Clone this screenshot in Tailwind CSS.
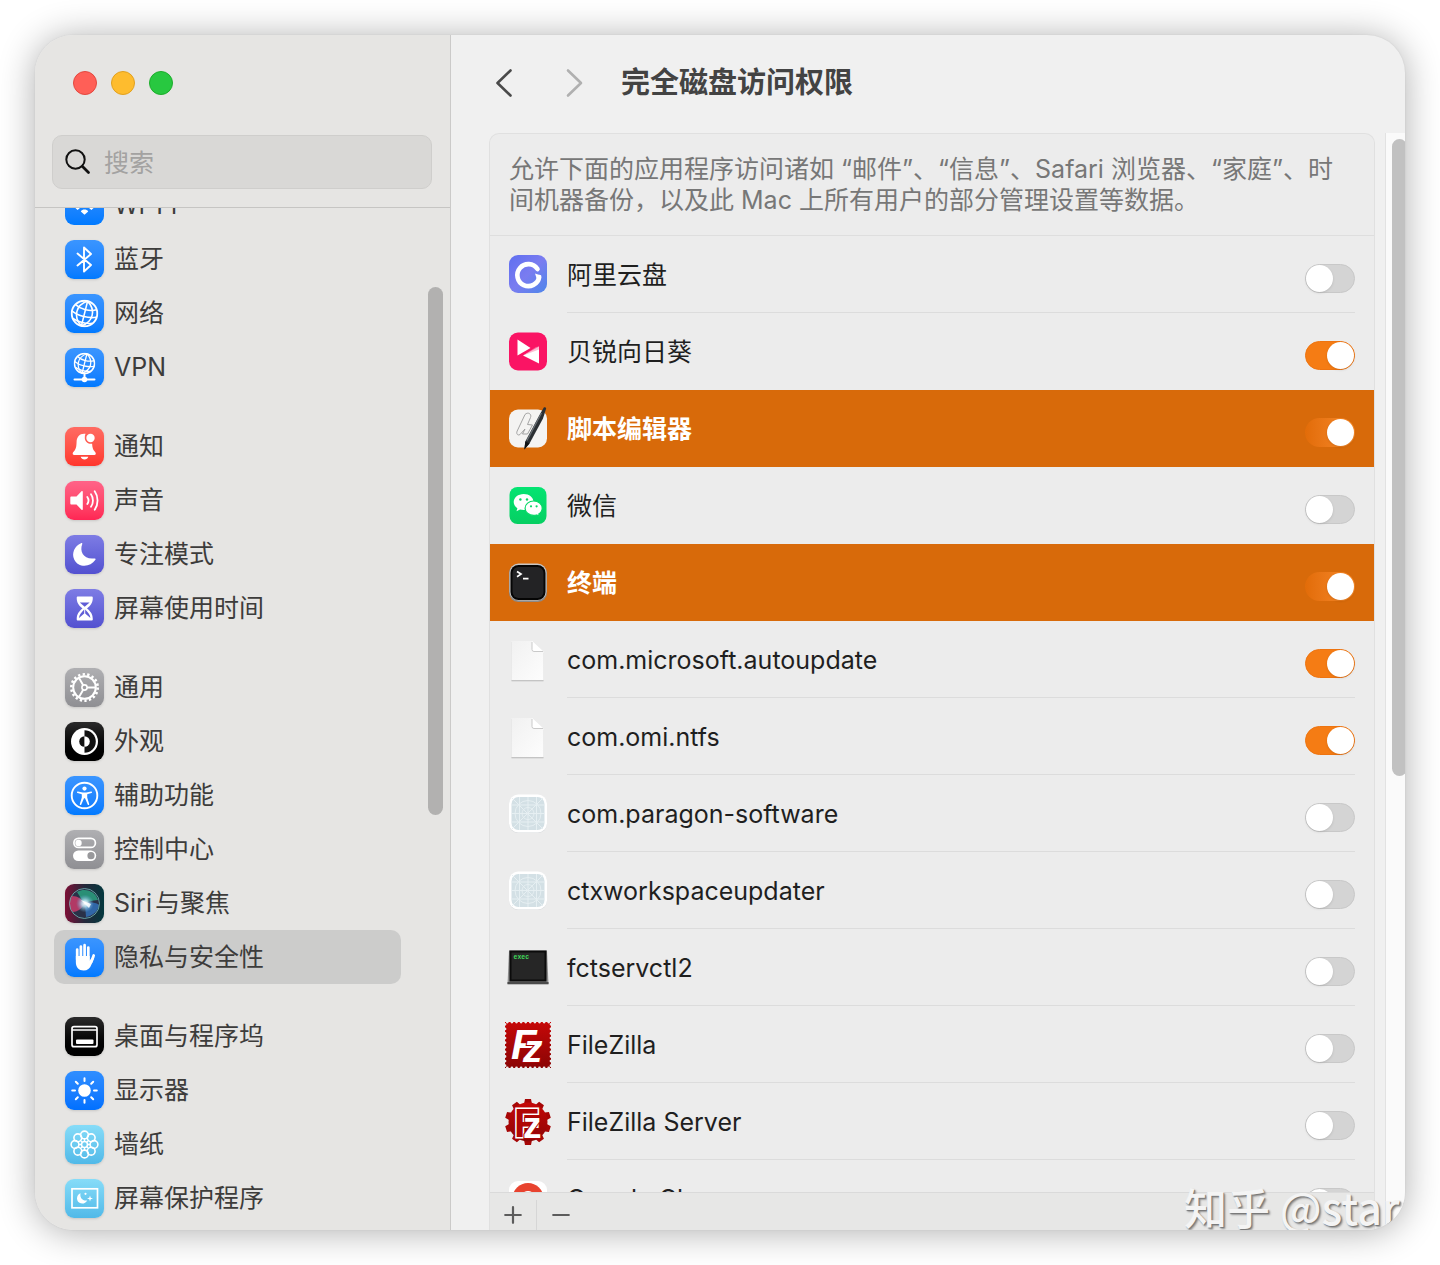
<!DOCTYPE html>
<html lang="zh-CN">
<head>
<meta charset="utf-8">
<meta name="viewport" content="width=device-width, initial-scale=1">
<title>完全磁盘访问权限</title>
<script src="https://cdn.jsdelivr.net/npm/@tailwindcss/browser@4"></script>
</head>
<body class="bg-white font-['Inter','Noto_Sans_CJK_SC',sans-serif] text-[25px] leading-[31px]">

<!-- Shared symbols -->
<svg class="absolute size-0" aria-hidden="true">
  <defs>
    <linearGradient id="paper" x1="0" y1="0" x2="1" y2="1"><stop offset="0" stop-color="#f1f1f1"/><stop offset="1" stop-color="#fdfdfd"/></linearGradient>
    <linearGradient id="fzred" x1="0" y1="0" x2="0" y2="1"><stop offset="0" stop-color="#c60808"/><stop offset="1" stop-color="#8a0505"/></linearGradient>
    <linearGradient id="ali" x1="0" y1="0" x2="1" y2="1"><stop offset="0" stop-color="#5f6ff0"/><stop offset=".5" stop-color="#7a7cf0"/><stop offset="1" stop-color="#4d86ea"/></linearGradient>
    <linearGradient id="wx" x1="0" y1="0" x2="0" y2="1"><stop offset="0" stop-color="#04e472"/><stop offset="1" stop-color="#06cf62"/></linearGradient>
    <linearGradient id="siriBg" x1="0" y1="0" x2="1" y2="0"><stop offset="0" stop-color="#7d0f36"/><stop offset=".5" stop-color="#25283a"/><stop offset="1" stop-color="#04383e"/></linearGradient>
    <radialGradient id="siriGlow"><stop offset="0" stop-color="#fff"/><stop offset=".35" stop-color="#bfe6f5" stop-opacity=".85"/><stop offset="1" stop-color="#5aa0d0" stop-opacity="0"/></radialGradient>
    <symbol id="globe" viewBox="0 0 28 28">
      <g fill="none" stroke="#fff" stroke-width="1.6">
        <circle cx="14" cy="14" r="12.8" stroke-width="1.9"/>
        <g transform="rotate(14 14 14)">
          <path d="M14 1.2v25.6M14 1.2C3.5 8 3.5 20 14 26.8M14 1.2c10.500 6.800 10.500 18.800 0 25.600"/>
          <path d="M3.200 7.500c6 3.500 15.600 3.500 21.600 0M1.200 14.500c7 3.500 18.600 3.500 25.600 0M4 21.500c5.500 2.500 14.500 2.500 20 0"/>
        </g>
      </g>
    </symbol>
    <symbol id="doc" viewBox="0 0 46 46">
      <path d="M6.500 4H27l11.500 11.500V43.500h-32z" fill="#000" opacity=".12" transform="translate(0 1)"/>
      <path d="M6.500 4H27l11.500 11.500V43.500h-32z" fill="url(#paper)"/>
      <path d="M6.500 43.500h32" stroke="#c4c4c4" stroke-width="1"/>
      <path d="M27 4v8.500a2 2 0 0 0 2 2h9.500z" fill="#fff"/>
      <path d="M27 5v7.500a2 2 0 0 0 2 2h9" fill="none" stroke="#c9c9c9" stroke-width="1"/>
    </symbol>
    <symbol id="kext" viewBox="0 0 46 46">
      <rect x="4" y="4" width="38" height="38" rx="9" fill="#d5d8da"/>
      <rect x="4" y="3.500" width="38" height="38" rx="9" fill="#fff"/>
      <rect x="6.500" y="6" width="33" height="33" rx="7" fill="#d3e0e5"/>
      <g fill="none" stroke="#e6eff2" stroke-width="1">
        <path d="M23 6v33M6.500 22.500h33M14.500 6v33M31.500 6v33M6.500 14h33M6.500 31h33" />
        <circle cx="23" cy="22.500" r="6"/><circle cx="23" cy="22.500" r="13"/>
        <path d="M7 7l31 31M38 7L7 38"/>
      </g>
    </symbol>
  </defs>
</svg>

<div class="flex h-screen p-[35px]">
  <div class="relative flex flex-1 min-w-0 overflow-hidden rounded-[38px] bg-[#f0f0f0] shadow-[0_2px_36px_rgba(0,0,0,0.32),0_0_2px_rgba(0,0,0,0.08)]">

    <!-- Sidebar -->
    <aside class="relative flex w-[416px] shrink-0 flex-col border-r border-[#cbcac9] bg-[#e6e5e3] text-[#3d3c3b]">
      <div class="border-b border-[#c6c5c3] pb-[18px] pl-[17px] pr-[18px] pt-9">
        <div class="flex gap-[14px] pl-[21px]">
          <button aria-label="关闭" class="size-6 rounded-full border border-[#e2483f] bg-[#ff5f57]"></button>
          <button aria-label="最小化" class="size-6 rounded-full border border-[#e1a01f] bg-[#febc2e]"></button>
          <button aria-label="缩放" class="size-6 rounded-full border border-[#1dad2b] bg-[#28c840]"></button>
        </div>
        <label class="mt-10 flex h-[54px] items-center gap-[11px] rounded-[10px] border border-[#cfcecc] bg-[#d9d8d6] pl-3">
          <svg class="size-7 shrink-0" viewBox="0 0 28 28" fill="none" stroke="#111" stroke-linecap="round"><circle cx="10.500" cy="11.500" r="9.200" stroke-width="2"/><path d="M17.500 18.500l6 6" stroke-width="2.800"/></svg>
          <input type="text" aria-label="搜索" placeholder="搜索" class="w-full min-w-0 bg-transparent pt-[2px] outline-none placeholder:text-[#a3a2a1]">
        </label>
      </div>

      <nav class="min-h-0 flex-1 overflow-hidden pl-[19px] pr-[49px]">
        <ul class="-mt-[30px]">
          <li><a href="#" class="flex h-[54px] items-center gap-[10px] pl-[11px]">
            <span class="size-[39px] shrink-0 rounded-[9px] bg-linear-to-b from-[#2f90ff] to-[#007aff]"><svg viewBox="0 0 39 39" fill="none" stroke="#fff" stroke-width="3"><path d="M6 16c7-7 20-7 27 0M11.500 23c4.500-5 11.500-5 16 0"/><path d="M15.800 25.500c1.500-2.600 5.900-2.600 7.400 0l-3.700 3.200z" fill="#fff" stroke="none"/></svg></span>Wi-Fi</a></li>
          <li><a href="#" class="flex h-[54px] items-center gap-[10px] pl-[11px]">
            <span class="size-[39px] shrink-0 rounded-[9px] bg-linear-to-b from-[#3a95ff] to-[#007aff] shadow-sm"><svg viewBox="0 0 39 39" fill="none" stroke="#fff" stroke-width="1.900" stroke-linejoin="round" stroke-linecap="round"><path d="M12.500 13.500l13.500 11.500-7 6.500V7.500l7 6.500-13.500 11.500"/></svg></span>蓝牙</a></li>
          <li><a href="#" class="flex h-[54px] items-center gap-[10px] pl-[11px]">
            <span class="size-[39px] shrink-0 rounded-[9px] bg-linear-to-b from-[#3a95ff] to-[#007aff] shadow-sm"><svg viewBox="0 0 39 39"><use href="#globe" x="5.500" y="5.500" width="28" height="28"/></svg></span>网络</a></li>
          <li><a href="#" class="flex h-[54px] items-center gap-[10px] pl-[11px]">
            <span class="size-[39px] shrink-0 rounded-[9px] bg-linear-to-b from-[#3a95ff] to-[#007aff] shadow-sm"><svg viewBox="0 0 39 39"><use href="#globe" x="8.500" y="4.500" width="22" height="22"/><path d="M19.500 26v5M9.500 31.500h20" stroke="#fff" stroke-width="2" stroke-linecap="round"/><circle cx="19.500" cy="31.500" r="2.800" fill="#fff"/></svg></span>VPN</a></li>

          <li class="mt-[25px]"><a href="#" class="flex h-[54px] items-center gap-[10px] pl-[11px]">
            <span class="size-[39px] shrink-0 rounded-[9px] bg-linear-to-b from-[#ff6b62] to-[#ff352b] shadow-sm"><svg viewBox="0 0 39 39" fill="#fff"><path d="M20.500 6.800c-5.500-.8-8.700 3-8.900 7.700-.2 5.500-.6 7.500-2.600 9.700-1 1.100-1.300 1.600-1.300 2.600 0 .7.500 1.200 1.300 1.200h20.500c.8 0 1.300-.5 1.300-1.200 0-1-.4-1.500-1.300-2.600-1.500-1.700-2.200-3.600-2.400-7.500-3.600.6-7-1.800-7.300-5.500-.1-1.600.1-3.100.7-4.400z"/><circle cx="25.500" cy="11" r="4.200"/><path d="M15.700 29.700h7.600c-.6 1.700-2 2.700-3.800 2.700s-3.200-1-3.800-2.700z"/></svg></span>通知</a></li>
          <li><a href="#" class="flex h-[54px] items-center gap-[10px] pl-[11px]">
            <span class="size-[39px] shrink-0 rounded-[9px] bg-linear-to-b from-[#ff6388] to-[#ff2554] shadow-sm"><svg viewBox="0 0 39 39" fill="none" stroke="#fff" stroke-width="1.800" stroke-linecap="round"><path d="M6.500 15.500h5l5-5.300c.6-.5 1.300-.3 1.300.5v17.600c0 .8-.7 1-1.300.5l-5-5.300h-5c-.8 0-1.200-.4-1.200-1.200v-5.600c0-.8.4-1.200 1.200-1.200z" fill="#fff" stroke="none"/><path d="M22.300 16c1.400 2 1.400 5 0 7M26 13.200c2.600 3.600 2.600 9 0 12.600M29.700 10.300c3.800 5.300 3.800 13.100 0 18.400"/></svg></span>声音</a></li>
          <li><a href="#" class="flex h-[54px] items-center gap-[10px] pl-[11px]">
            <span class="size-[39px] shrink-0 rounded-[9px] bg-linear-to-b from-[#7e7ce4] to-[#5350d0] shadow-sm"><svg viewBox="0 0 39 39" fill="#fff"><path d="M16 8.200c.9-.5 1.600.1 1.200 1-2.900 7.300 1.500 15.600 12.200 14.200 1-.1 1.500.6 1 1.400-5.200 8-17.200 8.100-21.200-.4C6.300 18.300 9.500 11 16 8.200z"/></svg></span>专注模式</a></li>
          <li><a href="#" class="flex h-[54px] items-center gap-[10px] pl-[11px]">
            <span class="size-[39px] shrink-0 rounded-[9px] bg-linear-to-b from-[#7e7ce4] to-[#5350d0] shadow-sm"><svg viewBox="0 0 39 39"><path d="M13 7.500h13.500c.9 0 1.300.5 1.300 1.300 0 5-2 7.700-5.800 10.700 3.800 3 5.800 5.700 5.800 10.700 0 .8-.4 1.300-1.300 1.300H13c-.9 0-1.300-.5-1.300-1.300 0-5 2-7.700 5.800-10.700-3.800-3-5.800-5.700-5.800-10.700 0-.8.4-1.300 1.300-1.300z" fill="#fff"/><path d="M14.800 13.500h9.800l-4.900 4.300zM19.200 20.500v4l-5.200 4.500c.2-3 2.200-5.500 5.200-8.500zM20.200 20.500c3 3 5 5.500 5.200 8.500l-5.200-4.500z" fill="#605dd6"/></svg></span>屏幕使用时间</a></li>

          <li class="mt-[25px]"><a href="#" class="flex h-[54px] items-center gap-[10px] pl-[11px]">
            <span class="size-[39px] shrink-0 rounded-[9px] bg-linear-to-b from-[#afafb2] to-[#8f8f93] shadow-sm"><svg viewBox="0 0 39 39" fill="none" stroke="#fff"><circle cx="19.500" cy="19.500" r="13.200" stroke-width="2.600" stroke-dasharray="2.300 2.308"/><circle cx="19.500" cy="19.500" r="11.300" stroke-width="2"/><circle cx="19.500" cy="19.500" r="2.600" stroke-width="1.600"/><path d="M22 19.500h8.500M18.200 17.300l-4.300-7.500M18.200 21.700l-4.300 7.500" stroke-width="1.900"/></svg></span>通用</a></li>
          <li><a href="#" class="flex h-[54px] items-center gap-[10px] pl-[11px]">
            <span class="size-[39px] shrink-0 rounded-[9px] bg-linear-to-b from-[#2b2b2b] to-black shadow-sm"><svg viewBox="0 0 39 39"><circle cx="19.500" cy="19.500" r="13.500" fill="#fff"/><path d="M19.500 8.200a11.300 11.300 0 0 1 0 22.600z" fill="#111"/><path d="M19.500 14.200a5.300 5.300 0 0 0 0 10.600z" fill="#111"/><path d="M19.500 14.200a5.300 5.300 0 0 1 0 10.600z" fill="#fff"/></svg></span>外观</a></li>
          <li><a href="#" class="flex h-[54px] items-center gap-[10px] pl-[11px]">
            <span class="size-[39px] shrink-0 rounded-[9px] bg-linear-to-b from-[#3a95ff] to-[#007aff] shadow-sm"><svg viewBox="0 0 39 39"><circle cx="19.500" cy="19.500" r="12.800" fill="none" stroke="#fff" stroke-width="1.900"/><circle cx="19.500" cy="12.600" r="2.100" fill="#fff"/><path d="M12.800 15.600l5 1h3.400l5-1c1-.1 1.200 1.200.2 1.500l-4.200 1.200v3.200l2 6.500c.2 1-1.100 1.400-1.500.5l-2.700-6.300h-1l-2.700 6.300c-.4.900-1.700.5-1.500-.5l2-6.500v-3.200l-4.200-1.200c-1-.3-.8-1.600.2-1.500z" fill="#fff"/></svg></span>辅助功能</a></li>
          <li><a href="#" class="flex h-[54px] items-center gap-[10px] pl-[11px]">
            <span class="size-[39px] shrink-0 rounded-[9px] bg-linear-to-b from-[#afafb2] to-[#8f8f93] shadow-sm"><svg viewBox="0 0 39 39"><rect x="8.900" y="8.400" width="21.500" height="9" rx="4.500" fill="none" stroke="#fff" stroke-width="1.700"/><circle cx="13.500" cy="12.900" r="3.200" fill="#fff"/><rect x="8" y="20.500" width="23.200" height="10.500" rx="5.250" fill="#fff"/><circle cx="26" cy="25.700" r="3.600" fill="#98989b"/></svg></span>控制中心</a></li>
          <li><a href="#" class="flex h-[54px] items-center gap-[10px] pl-[11px] [text-autospace:normal]">
            <span class="size-[39px] shrink-0 overflow-hidden rounded-[9px] shadow-sm"><svg viewBox="0 0 39 39"><rect width="39" height="39" fill="url(#siriBg)"/><circle cx="19.500" cy="19.500" r="15" fill="#2a3148"/><path d="M7 12c6 0 10 3 13 8-4 5-8 8-12 8-5-4-5-11-1-16z" fill="#d33d6d" opacity=".8"/><path d="M12 8c9-5 19 0 21 8-6 1-10 1-14 3z" fill="#2aa882" opacity=".8"/><path d="M20 20c6-3 12-1 14 1-1 7-7 11-13 12z" fill="#3483d8" opacity=".65"/><circle cx="20" cy="19.500" r="9" fill="url(#siriGlow)"/><path d="M16 16l10 4-2 4z" fill="#fff" opacity=".85"/><circle cx="19.500" cy="19.500" r="15" fill="none" stroke="#6fb6b4" stroke-width="1" opacity=".8"/></svg></span>Siri与聚焦</a></li>
          <li><a href="#" aria-current="page" class="flex h-[54px] items-center gap-[10px] rounded-[10px] bg-[#cccccb] pl-[11px]">
            <span class="size-[39px] shrink-0 rounded-[9px] bg-linear-to-b from-[#3a95ff] to-[#007aff] shadow-sm"><svg viewBox="0 0 39 39" fill="none" stroke="#fff" stroke-width="2.700" stroke-linecap="round"><path d="M12.200 11.500v10M15.900 8.500v12M19.600 7.200v13M23.300 9.500v12M28.700 17.500l-2.500 6.500"/><path d="M10.850 18h13.800v4.500l2.300-2.500 2.500-.5-3 7c-1.500 4-4 6-7.800 6-5 0-7.800-3.200-7.800-8.500z" fill="#fff" stroke="none"/></svg></span>隐私与安全性</a></li>

          <li class="mt-[25px]"><a href="#" class="flex h-[54px] items-center gap-[10px] pl-[11px]">
            <span class="size-[39px] shrink-0 rounded-[9px] bg-linear-to-b from-[#2b2b2b] to-black shadow-sm"><svg viewBox="0 0 39 39"><rect x="7" y="9.700" width="25" height="20" rx="2" fill="none" stroke="#fff" stroke-width="1.700"/><path d="M7 13h25" stroke="#fff" stroke-width="1.500"/><rect x="11" y="22.500" width="17.500" height="4.500" rx="1" fill="#fff"/></svg></span>桌面与程序坞</a></li>
          <li><a href="#" class="flex h-[54px] items-center gap-[10px] pl-[11px]">
            <span class="size-[39px] shrink-0 rounded-[9px] bg-linear-to-b from-[#2f8eff] to-[#0070ff] shadow-sm"><svg viewBox="0 0 39 39" stroke="#fff" stroke-width="2" stroke-linecap="round"><circle cx="19.500" cy="19.500" r="6.300" fill="#fff" stroke="none"/><path d="M19.500 7.200v2.800M19.500 29v2.800M7.200 19.500H10M29 19.500h2.800M10.800 10.800l2 2M26.200 26.200l2 2M10.800 28.200l2-2M26.200 12.800l2-2"/></svg></span>显示器</a></li>
          <li><a href="#" class="flex h-[54px] items-center gap-[10px] pl-[11px]">
            <span class="size-[39px] shrink-0 rounded-[9px] bg-linear-to-b from-[#86dcf8] to-[#50b9e8] shadow-sm"><svg viewBox="0 0 39 39" fill="none" stroke="#fff" stroke-width="1.600"><circle cx="19.500" cy="10" r="3.900"/><circle cx="26.200" cy="12.800" r="3.900"/><circle cx="29" cy="19.500" r="3.900"/><circle cx="26.200" cy="26.200" r="3.900"/><circle cx="19.500" cy="29" r="3.900"/><circle cx="12.800" cy="26.200" r="3.900"/><circle cx="10" cy="19.500" r="3.900"/><circle cx="12.800" cy="12.800" r="3.900"/><circle cx="19.500" cy="19.500" r="3"/><path d="M19.500 14v3M19.500 22v3M14 19.500h3M22 19.500h3M15.600 15.600l1.800 1.800M21.600 21.600l1.800 1.800M15.600 23.400l1.800-1.800M21.600 17.400l1.800-1.800" stroke-width="1.300"/></svg></span>墙纸</a></li>
          <li><a href="#" class="flex h-[54px] items-center gap-[10px] pl-[11px]">
            <span class="size-[39px] shrink-0 rounded-[9px] bg-linear-to-b from-[#86dcf8] to-[#50b9e8] shadow-sm"><svg viewBox="0 0 39 39"><rect x="7" y="9.800" width="25.500" height="19" fill="none" stroke="#fff" stroke-width="1.700"/><path d="M15.500 14.200c-.8 4.500 1.800 7.800 6.800 7.200-1.200 2-3 3.100-5.200 3.100-3 0-5.100-2.200-5.100-5.200 0-2.400 1.300-4.200 3.500-5.100z" fill="#fff"/><path d="M25 16.500l.7 2.300 2.300.7-2.300.7-.7 2.300-.7-2.300-2.300-.7 2.300-.7z" fill="#fff"/><circle cx="20.500" cy="14.800" r="1.100" fill="#fff"/></svg></span>屏幕保护程序</a></li>
        </ul>
      </nav>
      <div class="absolute right-[7px] top-[252px] h-[528px] w-[15px] rounded-full bg-[#b2b1b0]"></div>
    </aside>

    <!-- Content -->
    <main class="flex min-w-0 flex-1 flex-col">
      <header class="flex h-[98px] shrink-0 items-center pb-[3px] pl-[44px]">
        <button aria-label="后退" class="w-5"><svg class="h-[30px] w-5" viewBox="0 0 20 30" fill="none" stroke="#4a4a4a" stroke-width="2.600" stroke-linecap="round" stroke-linejoin="round"><path d="M15.500 2.500L2.500 15l13 12.500"/></svg></button>
        <button aria-label="前进" class="ml-[50px] w-5"><svg class="h-[30px] w-5" viewBox="0 0 20 30" fill="none" stroke="#b0b0b0" stroke-width="2.600" stroke-linecap="round" stroke-linejoin="round"><path d="M3 2.500L16 15 3 27.500"/></svg></button>
        <h1 class="ml-9 text-[29px] font-bold text-[#434343]">完全磁盘访问权限</h1>
      </header>

      <div class="flex min-h-0 flex-1">
        <section class="ml-[38px] mr-[10px] flex min-w-0 flex-1 flex-col overflow-hidden rounded-t-[10px] border border-b-0 border-[#e0e0e0] bg-[#ececec]">
          <p class="h-[102px] shrink-0 border-b border-[#dedede] px-[19px] pt-5 text-[#777]">允许下面的应用程序访问诸如 “邮件”、“信息”、Safari 浏览器、“家庭”、时<br>间机器备份，以及此 Mac 上所有用户的部分管理设置等数据。</p>

          <ul class="-mx-px min-h-0 flex-1 overflow-hidden text-[#1f1f1f]">
            <li class="flex h-[77px] pl-4 pr-5">
              <svg class="mr-4 mt-4 size-[46px] shrink-0" viewBox="0 0 46 46"><rect x="4" y="3" width="38" height="38" rx="9" fill="url(#ali)"/><path d="M32.500 17.500A11 11 0 1 0 34.200 25.500" fill="none" stroke="#fff" stroke-width="4.600" stroke-linecap="round" transform="translate(0 -.5)"/><path d="M30 21.500l6 2-3.500 5.500z" fill="#fff"/></svg>
              <label for="a1" class="flex flex-1 items-center justify-between border-b border-[#dcdcdc] pt-[2px]">阿里云盘
                <input id="a1" type="checkbox" class="mt-[6px] flex h-[29px] w-[50px] appearance-none rounded-full border border-[#c8c8c8] bg-[#d4d4d4] before:size-[27px] before:rounded-full before:bg-white before:shadow before:content-[''] checked:border-[#ee7410] checked:bg-[#f57c14] checked:before:ml-[21px]"></label>
            </li>
            <li class="flex h-[77px] pl-4 pr-5">
              <svg class="mr-4 mt-4 size-[46px] shrink-0" viewBox="0 0 46 46"><rect x="4" y="3.500" width="38" height="38" rx="9" fill="#fa1464"/><path d="M12.500 10.500l13 8.500-13 7.500z" fill="#fff"/><path d="M34 17.500v17L18 26.500z" fill="#fff"/><path d="M18 26.500l13-8.500 3-.5v3z" fill="#fb8fb4" opacity=".6"/></svg>
              <label for="a2" class="flex flex-1 items-center justify-between pt-[2px]">贝锐向日葵
                <input id="a2" type="checkbox" checked class="mt-[6px] flex h-[29px] w-[50px] appearance-none rounded-full border border-[#c8c8c8] bg-[#d4d4d4] before:size-[27px] before:rounded-full before:bg-white before:shadow before:content-[''] checked:border-[#ee7410] checked:bg-[#f57c14] checked:before:ml-[21px]"></label>
            </li>
            <li class="flex h-[77px] bg-[#d86a0a] pl-4 pr-5 font-bold text-white">
              <svg class="mr-4 mt-4 size-[46px] shrink-0" viewBox="0 0 46 46"><rect x="4" y="3.500" width="38" height="38" rx="9" fill="#f4f3f2"/><path d="M20 8.500c3-3 7-.5 5.500 3l-3 7 5 .5-5 9h-5l2.500-5-5 5.500c-2.500 1.500-4-1-2.800-3.500z" fill="none" stroke="#9a9a9a" stroke-width=".9"/><path d="M38.800 1.500c1-.8 2.500 0 2.300 1.300L38 12.500 24.500 37.500 19.300 43.500l1-8L34.500 9z" fill="#2b2f33"/><path d="M36.500 7L22 34.500" stroke="#6d7378" stroke-width="1.200"/><path d="M20.300 35.500l4.200 2-5.200 6z" fill="#101214"/></svg>
              <label for="a3" class="flex flex-1 items-center justify-between pt-[2px]">脚本编辑器
                <input id="a3" type="checkbox" checked class="mt-[6px] flex h-[29px] w-[50px] appearance-none rounded-full bg-linear-to-r from-[#e26c08] to-[#f88a28] before:my-px before:ml-[22px] before:size-[27px] before:rounded-full before:bg-white before:shadow before:content-['']"></label>
            </li>
            <li class="flex h-[77px] pl-4 pr-5">
              <svg class="mr-4 mt-4 size-[46px] shrink-0" viewBox="0 0 46 46"><rect x="4.500" y="4" width="37" height="37" rx="8" fill="url(#wx)"/><path d="M18.700 11c-5.600 0-10 3.600-10 8 0 2.600 1.400 4.800 3.700 6.200l-.9 3 3.500-1.700c1.200.3 2.400.5 3.700.5 5.500 0 9.800-3.500 9.800-8s-4.300-8-9.800-8z" fill="#fff"/><path d="M28.700 18c-4.800 0-8.600 3.200-8.600 7.200s3.800 7.200 8.600 7.200c1 0 2-.2 2.900-.4l2.900 1.400-.7-2.500c2.100-1.300 3.400-3.300 3.400-5.700 0-4-3.800-7.200-8.500-7.200z" fill="#fff" stroke="#07d866" stroke-width="1.200"/><circle cx="15.400" cy="16.500" r="1.200" fill="#07d866"/><circle cx="22" cy="16.500" r="1.200" fill="#07d866"/><circle cx="26" cy="23.300" r="1.100" fill="#07d866"/><circle cx="31.600" cy="23.300" r="1.100" fill="#07d866"/></svg>
              <label for="a4" class="flex flex-1 items-center justify-between pt-[2px]">微信
                <input id="a4" type="checkbox" class="mt-[6px] flex h-[29px] w-[50px] appearance-none rounded-full border border-[#c8c8c8] bg-[#d4d4d4] before:size-[27px] before:rounded-full before:bg-white before:shadow before:content-[''] checked:border-[#ee7410] checked:bg-[#f57c14] checked:before:ml-[21px]"></label>
            </li>
            <li class="flex h-[77px] bg-[#d86a0a] pl-4 pr-5 font-bold text-white">
              <svg class="mr-4 mt-4 size-[46px] shrink-0" viewBox="0 0 46 46"><rect x="4" y="4" width="38" height="38" rx="9" fill="#8f8a86"/><rect x="4.500" y="3.500" width="37" height="37" rx="9" fill="#c9c5c2"/><rect x="5.500" y="5" width="35" height="35" rx="8" fill="#050505"/><rect x="7.500" y="7" width="31" height="31" rx="6" fill="#232325"/><path d="M12 11.500l4 2.600-4 2.600M18 18.700h5.500" fill="none" stroke="#fff" stroke-width="1.700"/></svg>
              <label for="a5" class="flex flex-1 items-center justify-between pt-[2px]">终端
                <input id="a5" type="checkbox" checked class="mt-[6px] flex h-[29px] w-[50px] appearance-none rounded-full bg-linear-to-r from-[#e26c08] to-[#f88a28] before:my-px before:ml-[22px] before:size-[27px] before:rounded-full before:bg-white before:shadow before:content-['']"></label>
            </li>
            <li class="flex h-[77px] pl-4 pr-5">
              <svg class="mr-4 mt-4 size-[46px] shrink-0"><use href="#doc"/></svg>
              <label for="a6" class="flex flex-1 items-center justify-between border-b border-[#dcdcdc] pt-[2px]">com.microsoft.autoupdate
                <input id="a6" type="checkbox" checked class="mt-[6px] flex h-[29px] w-[50px] appearance-none rounded-full border border-[#c8c8c8] bg-[#d4d4d4] before:size-[27px] before:rounded-full before:bg-white before:shadow before:content-[''] checked:border-[#ee7410] checked:bg-[#f57c14] checked:before:ml-[21px]"></label>
            </li>
            <li class="flex h-[77px] pl-4 pr-5">
              <svg class="mr-4 mt-4 size-[46px] shrink-0"><use href="#doc"/></svg>
              <label for="a7" class="flex flex-1 items-center justify-between border-b border-[#dcdcdc] pt-[2px]">com.omi.ntfs
                <input id="a7" type="checkbox" checked class="mt-[6px] flex h-[29px] w-[50px] appearance-none rounded-full border border-[#c8c8c8] bg-[#d4d4d4] before:size-[27px] before:rounded-full before:bg-white before:shadow before:content-[''] checked:border-[#ee7410] checked:bg-[#f57c14] checked:before:ml-[21px]"></label>
            </li>
            <li class="flex h-[77px] pl-4 pr-5">
              <svg class="mr-4 mt-4 size-[46px] shrink-0"><use href="#kext"/></svg>
              <label for="a8" class="flex flex-1 items-center justify-between border-b border-[#dcdcdc] pt-[2px]">com.paragon-software
                <input id="a8" type="checkbox" class="mt-[6px] flex h-[29px] w-[50px] appearance-none rounded-full border border-[#c8c8c8] bg-[#d4d4d4] before:size-[27px] before:rounded-full before:bg-white before:shadow before:content-[''] checked:border-[#ee7410] checked:bg-[#f57c14] checked:before:ml-[21px]"></label>
            </li>
            <li class="flex h-[77px] pl-4 pr-5">
              <svg class="mr-4 mt-4 size-[46px] shrink-0"><use href="#kext"/></svg>
              <label for="a9" class="flex flex-1 items-center justify-between border-b border-[#dcdcdc] pt-[2px]">ctxworkspaceupdater
                <input id="a9" type="checkbox" class="mt-[6px] flex h-[29px] w-[50px] appearance-none rounded-full border border-[#c8c8c8] bg-[#d4d4d4] before:size-[27px] before:rounded-full before:bg-white before:shadow before:content-[''] checked:border-[#ee7410] checked:bg-[#f57c14] checked:before:ml-[21px]"></label>
            </li>
            <li class="flex h-[77px] pl-4 pr-5">
              <svg class="mr-4 mt-4 size-[46px] shrink-0" viewBox="0 0 46 46"><path d="M4 5.500h38l1.500 34h-41z" fill="#8c8c8c"/><path d="M4.500 5.500h37v31h-37z" fill="#0b0b0b"/><path d="M6.500 7.500h33v27h-33z" fill="#262626"/><path d="M2.500 37h41v2h-41z" fill="#4a4a4a"/><text x="8.500" y="13.500" font-family="Liberation Mono" font-weight="700" font-size="6.500" fill="#3fd95a">exec</text></svg>
              <label for="a10" class="flex flex-1 items-center justify-between border-b border-[#dcdcdc] pt-[2px]">fctservctl2
                <input id="a10" type="checkbox" class="mt-[6px] flex h-[29px] w-[50px] appearance-none rounded-full border border-[#c8c8c8] bg-[#d4d4d4] before:size-[27px] before:rounded-full before:bg-white before:shadow before:content-[''] checked:border-[#ee7410] checked:bg-[#f57c14] checked:before:ml-[21px]"></label>
            </li>
            <li class="flex h-[77px] pl-4 pr-5">
              <svg class="mr-4 mt-4 size-[46px] shrink-0" viewBox="0 0 46 46"><rect width="46" height="46" fill="url(#fzred)"/><rect width="46" height="46" fill="none" stroke="#ececec" stroke-width="2.800" stroke-dasharray="0 4.600" stroke-dashoffset="2.300" stroke-linecap="round"/><text x="6" y="37" font-family="Liberation Sans" font-weight="700" font-style="italic" font-size="42" fill="#fff">F<tspan x="18" y="40" font-size="39" stroke="#a80606" stroke-width="2" paint-order="stroke">z</tspan></text></svg>
              <label for="a11" class="flex flex-1 items-center justify-between border-b border-[#dcdcdc] pt-[2px]">FileZilla
                <input id="a11" type="checkbox" class="mt-[6px] flex h-[29px] w-[50px] appearance-none rounded-full border border-[#c8c8c8] bg-[#d4d4d4] before:size-[27px] before:rounded-full before:bg-white before:shadow before:content-[''] checked:border-[#ee7410] checked:bg-[#f57c14] checked:before:ml-[21px]"></label>
            </li>
            <li class="flex h-[77px] pl-4 pr-5">
              <svg class="mr-4 mt-4 size-[46px] shrink-0" viewBox="0 0 46 46"><g fill="#a60606"><path d="M20 0h6l1.200 6h-8.400zM20 46h6l1.200-6h-8.400z"/><path d="M20 0h6l1.200 6h-8.400zM20 46h6l1.200-6h-8.400z" transform="rotate(36 23 23)"/><path d="M20 0h6l1.200 6h-8.400zM20 46h6l1.200-6h-8.400z" transform="rotate(72 23 23)"/><path d="M20 0h6l1.200 6h-8.400zM20 46h6l1.200-6h-8.400z" transform="rotate(108 23 23)"/><path d="M20 0h6l1.200 6h-8.400zM20 46h6l1.200-6h-8.400z" transform="rotate(144 23 23)"/></g><circle cx="23" cy="23" r="19.500" fill="url(#fzred)"/><text x="9" y="38" font-family="Liberation Sans" font-weight="700" font-size="41" fill="#b00606" stroke="#fff" stroke-width="3" paint-order="stroke">F<tspan x="18" y="39" font-size="37" fill="#fff" stroke="#a80606" stroke-width="2">z</tspan></text></svg>
              <label for="a12" class="flex flex-1 items-center justify-between border-b border-[#dcdcdc] pt-[2px]">FileZilla Server
                <input id="a12" type="checkbox" class="mt-[6px] flex h-[29px] w-[50px] appearance-none rounded-full border border-[#c8c8c8] bg-[#d4d4d4] before:size-[27px] before:rounded-full before:bg-white before:shadow before:content-[''] checked:border-[#ee7410] checked:bg-[#f57c14] checked:before:ml-[21px]"></label>
            </li>
            <li class="flex h-[77px] pl-4 pr-5">
              <svg class="mr-4 mt-4 size-[46px] shrink-0" viewBox="0 0 46 46"><rect x="4" y="5" width="38" height="38" rx="9" fill="#fff"/><circle cx="23" cy="22.500" r="15.500" fill="#e8432f"/><circle cx="23" cy="22.500" r="7.500" fill="#fff"/><circle cx="23" cy="22.500" r="6" fill="#3b82f0"/></svg>
              <label for="a13" class="flex flex-1 items-center justify-between pt-[2px]">Google Chrome
                <input id="a13" type="checkbox" class="mt-[6px] flex h-[29px] w-[50px] appearance-none rounded-full border border-[#c8c8c8] bg-[#d4d4d4] before:size-[27px] before:rounded-full before:bg-white before:shadow before:content-[''] checked:border-[#ee7410] checked:bg-[#f57c14] checked:before:ml-[21px]"></label>
            </li>
          </ul>

          <div class="flex h-[38px] shrink-0 items-end border-t border-[#dadada] bg-[#e7e7e6]">
            <button aria-label="添加" class="flex h-[30px] w-[47px] justify-center border-r border-[#d6d6d6]"><svg class="mt-[6px] size-[18px]" viewBox="0 0 18 18" stroke="#5c5c5c" stroke-width="2.200" stroke-linecap="round"><path d="M9 1.200v15.600M1.200 9h15.600"/></svg></button>
            <button aria-label="移除" class="flex h-[30px] w-[47px] justify-center"><svg class="mt-[6px] size-[18px]" viewBox="0 0 18 18" stroke="#5c5c5c" stroke-width="2.200" stroke-linecap="round"><path d="M1.200 9h15.600"/></svg></button>
          </div>
        </section>

        <!-- Scroll track -->
        <div class="w-5 shrink-0 overflow-hidden border-l border-[#e2e2e2] bg-[#fafafa] pl-[6px] pt-[6px]">
          <div class="h-[637px] w-[15px] rounded-full bg-[#c1c1c1]"></div>
        </div>
      </div>
    </main>

    <!-- Watermark -->
    <div class="pointer-events-none absolute bottom-0 right-0 h-12 w-[221px] overflow-hidden whitespace-nowrap font-['Noto_Sans_CJK_SC',sans-serif] text-[43px] font-medium leading-[48px] text-[#f4f4f4] [text-shadow:1px_1px_1px_#777,2px_2px_2px_#999]">知乎 @star</div>
  </div>
</div>
</body>
</html>
